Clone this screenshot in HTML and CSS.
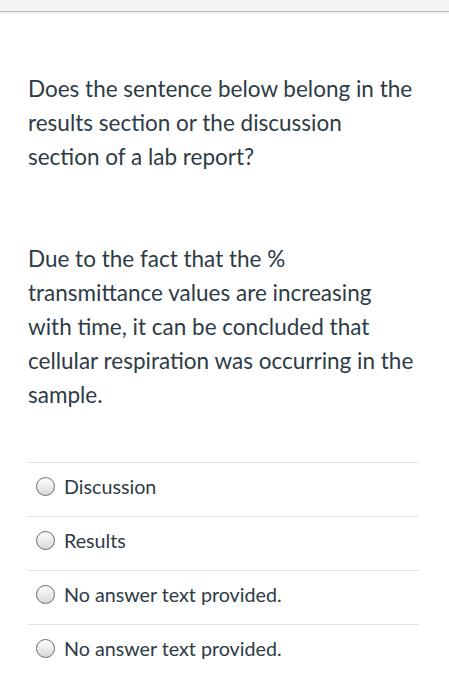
FILE: index.html
```html
<!DOCTYPE html>
<html>
<head>
<meta charset="utf-8">
<link rel="stylesheet" href="styles.css">
</head>
<body>
<div class="topbar"></div>
<main class="content">
  <p class="q">Does the sentence below belong in the results section or the discussion section of a lab report?</p>
  <p class="q q2">Due to the fact that the % transmittance values are increasing with time, it can be concluded that cellular respiration was occurring in the sample.</p>
  <ul class="answers">
    <li class="answer"><span class="radio"></span><span class="label">Discussion</span></li>
    <li class="answer"><span class="radio"></span><span class="label">Results</span></li>
    <li class="answer"><span class="radio"></span><span class="label">No answer text provided.</span></li>
    <li class="answer"><span class="radio"></span><span class="label">No answer text provided.</span></li>
  </ul>
</main>
</body>
</html>
```
FILE: styles.css
```css
html, body {
  margin: 0;
  padding: 0;
  background: #ffffff;
}
body {
  font-family: Lato, "Open Sans", sans-serif;
  color: #2d3b45;
}
.topbar {
  height: 11px;
  background: #f4f4f4;
  border-bottom: 1px solid #bdbdbd;
  box-shadow: 0 1px 2px rgba(0,0,0,0.12);
}
.content {
  padding: 60px 30px 0 28px;
}
.q {
  margin: 0;
  font-size: 22.5px;
  line-height: 34px;
}
.q2 {
  margin-top: 68px;
}
.answers {
  list-style: none;
  margin: 50px 0 0 0;
  padding: 0;
}
.answer {
  display: flex;
  align-items: center;
  box-sizing: border-box;
  height: 54px;
  padding: 0 0 6px 8px;
  border-top: 1px solid #e2e2e2;
  font-size: 19.7px;
}
.radio {
  width: 17px;
  height: 17px;
  border-radius: 50%;
  border: 1px solid #6b6b6b;
  background: linear-gradient(#ffffff, #d8d8d8);
  margin-right: 9px;
  flex: none;
}
.label {
  line-height: 24px;
}
```
